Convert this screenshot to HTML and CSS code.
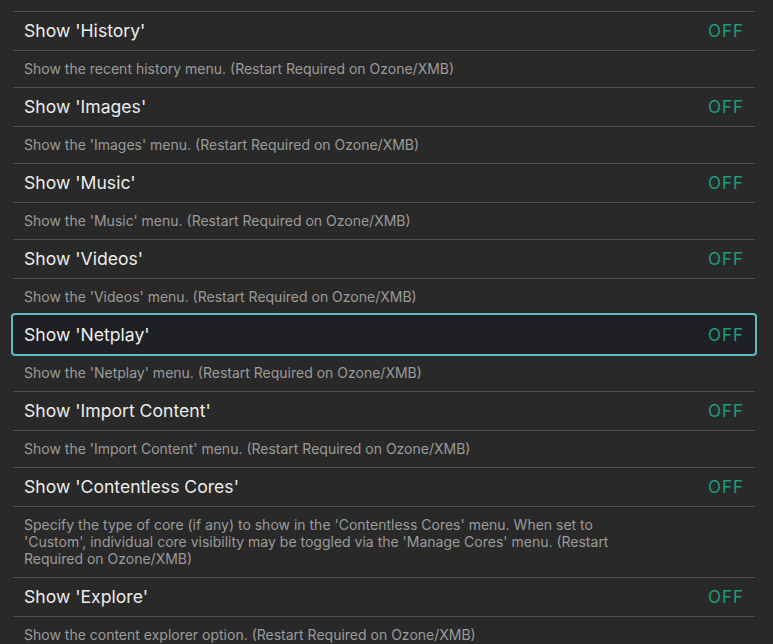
FILE: index.html
```html
<!DOCTYPE html>
<html>
<head>
<meta charset="utf-8">
<link rel="stylesheet" href="styles.css">
</head>
<body>
<div class="list">
  <div class="item"><div class="title"><span>Show 'History'</span><span class="val">OFF</span></div><div class="desc">Show the recent history menu. (Restart Required on Ozone/XMB)</div></div>
  <div class="item"><div class="title"><span>Show 'Images'</span><span class="val">OFF</span></div><div class="desc">Show the 'Images' menu. (Restart Required on Ozone/XMB)</div></div>
  <div class="item"><div class="title"><span>Show 'Music'</span><span class="val">OFF</span></div><div class="desc">Show the 'Music' menu. (Restart Required on Ozone/XMB)</div></div>
  <div class="item"><div class="title"><span>Show 'Videos'</span><span class="val">OFF</span></div><div class="desc">Show the 'Videos' menu. (Restart Required on Ozone/XMB)</div></div>
  <div class="item selected"><div class="title"><span>Show 'Netplay'</span><span class="val">OFF</span></div><div class="desc">Show the 'Netplay' menu. (Restart Required on Ozone/XMB)</div></div>
  <div class="item"><div class="title"><span>Show 'Import Content'</span><span class="val">OFF</span></div><div class="desc">Show the 'Import Content' menu. (Restart Required on Ozone/XMB)</div></div>
  <div class="item"><div class="title"><span>Show 'Contentless Cores'</span><span class="val">OFF</span></div><div class="desc">Specify the type of core (if any) to show in the 'Contentless Cores' menu. When set to 'Custom', individual core visibility may be toggled via the 'Manage Cores' menu. (Restart Required on Ozone/XMB)</div></div>
  <div class="item"><div class="title"><span>Show 'Explore'</span><span class="val">OFF</span></div><div class="desc">Show the content explorer option. (Restart Required on Ozone/XMB)</div></div>
</div>
</body>
</html>
```

FILE: styles.css
```css
html, body {
  margin: 0;
  padding: 0;
  background: #292929;
  height: 644px;
  overflow: hidden;
}
body {
  font-family: Inter, "Noto Sans", sans-serif;
}
.list {
  margin: 11px 0 0 13px;
  width: 742px;
}
.title {
  display: flex;
  justify-content: space-between;
  align-items: center;
  height: 36px;
  border-top: 1px solid #4f4f4f;
  padding: 0 11px 2px;
  font-size: 17.6px;
  color: #ececec;
}
.val {
  color: #1f9c7d;
  letter-spacing: 1px;
  font-size: 17px;
  margin-top: 2px;
}
.desc {
  border-top: 1px solid #4f4f4f;
  padding: 9px 130px 10px 11px;
  font-size: 14px;
  line-height: 17px;
  color: #9b9b9b;
}
.selected .title {
  background: #1f2023;
  border-top-color: #1f2023;
  outline: 2px solid #5dbcbf;
  border-radius: 2px;
  position: relative;
}
.selected .desc {
  border-top-color: #292929;
}
```
